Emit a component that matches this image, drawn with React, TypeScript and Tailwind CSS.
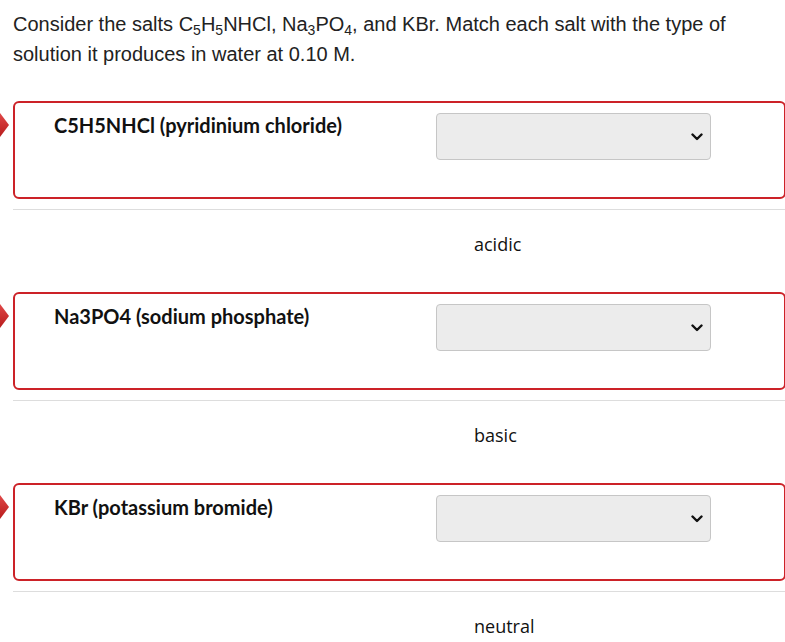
import React from 'react';

type Item = { label: string; answer: string };

const items: Item[] = [
  { label: 'C5H5NHCl (pyridinium chloride)', answer: 'acidic' },
  { label: 'Na3PO4 (sodium phosphate)', answer: 'basic' },
  { label: 'KBr (potassium bromide)', answer: 'neutral' },
];

const Chevron: React.FC = () => (
  <svg width="12" height="8" viewBox="0 0 12 8" className="text-[#111]">
    <path d="M1.5 1.5 L6 6 L10.5 1.5" fill="none" stroke="currentColor" strokeWidth="2.4" strokeLinecap="round" strokeLinejoin="round" />
  </svg>
);

const Marker: React.FC = () => (
  <svg width="10" height="24" viewBox="0 0 10 24" className="absolute left-[-15px] top-[10px]">
    <defs>
      <linearGradient id="mk" x1="0" y1="0" x2="0" y2="1">
        <stop offset="0" stopColor="#e04848" />
        <stop offset="1" stopColor="#b81c1c" />
      </linearGradient>
    </defs>
    <polygon points="0,0 9,12 0,24" fill="url(#mk)" />
  </svg>
);

// small subscript that does not push the line box
const Sub: React.FC<{ children: React.ReactNode }> = ({ children }) => (
  <sub className="text-[14px] leading-none">{children}</sub>
);

const App: React.FC = () => {
  return (
    <div className="w-[785px] h-[642px] overflow-hidden bg-white">
      <p
        className="pl-[13px] pt-[9px] pr-4 text-[20px] leading-[30px] text-[#222]"
        style={{ fontFamily: '"Liberation Sans", Arial, sans-serif' }}
      >
        Consider the salts C<Sub>5</Sub>H<Sub>5</Sub>NHCl, Na<Sub>3</Sub>PO<Sub>4</Sub>, and KBr. Match each salt with the type of
        solution it produces in water at 0.10 M.
      </p>

      <div className="mt-[32px] flex flex-col">
        {items.map((item) => (
          <div key={item.label} className="flex flex-col">
            <div className="relative ml-[13px] w-[773px] h-[98px] border-2 border-[#cc2228] rounded-[6px] flex items-start pt-[10px]">
              <Marker />
              <div
                className="w-[421px] pl-[39px] text-[20px] leading-[24px] font-bold text-[#111]"
                style={{ fontFamily: 'Lato, "Open Sans", sans-serif' }}
              >
                {item.label}
              </div>
              <div className="w-[275px] h-[47px] bg-[#ececec] border border-[#c6c6c6] rounded-[4px] flex items-center justify-end pr-[7px]">
                <Chevron />
              </div>
            </div>
            <div className="ml-[13px] mt-[10px] border-t border-[#dddddd]" />
            <div
              className="h-[82px] pl-[474px] pt-[22px] text-[18px] leading-[24px] text-[#111]"
              style={{ fontFamily: '"Open Sans", sans-serif' }}
            >
              {item.answer}
            </div>
          </div>
        ))}
      </div>
    </div>
  );
};

export default App;
